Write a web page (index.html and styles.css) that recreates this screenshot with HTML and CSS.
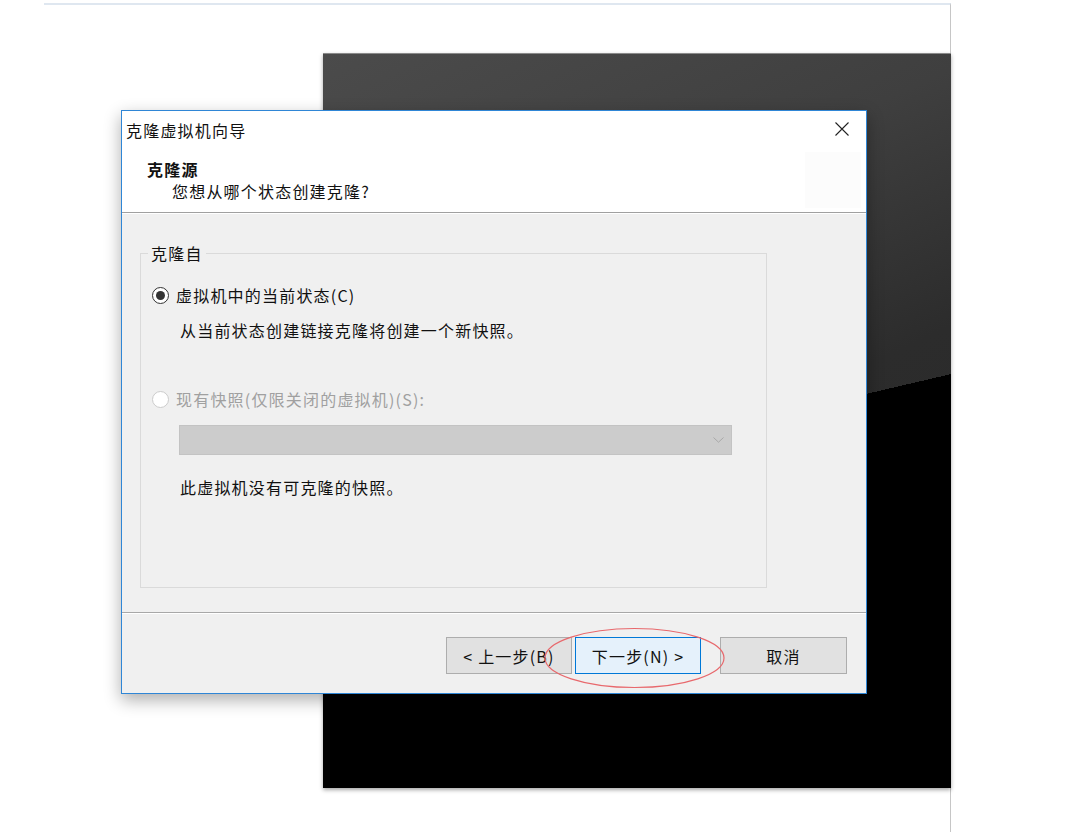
FILE: index.html
```html
<!DOCTYPE html>
<html lang="zh-CN">
<head>
<meta charset="utf-8">
<title>克隆虚拟机向导</title>
<link rel="stylesheet" href="styles.css">
</head>
<body>
<div class="page">
  <div class="vm-screen"></div>
  <div class="dialog">
    <div class="titlebar">
      <span class="title">克隆虚拟机向导</span>
      <svg class="close" width="14" height="14" viewBox="0 0 14 14"><path d="M0.5 0.5 L13.5 13.5 M13.5 0.5 L0.5 13.5" stroke="#222" stroke-width="1.1" fill="none"/></svg>
    </div>
    <div class="header">
      <div class="header-text">
        <div class="h-title">克隆源</div>
        <div class="h-sub">您想从哪个状态创建克隆?</div>
      </div>
      <div class="header-icon"></div>
    </div>
    <div class="body">
      <fieldset class="group">
        <legend>克隆自</legend>
        <div class="radio-row">
          <span class="radio checked"></span>
          <span>虚拟机中的当前状态(C)</span>
        </div>
        <div class="desc">从当前状态创建链接克隆将创建一个新快照。</div>
        <div class="radio-row disabled">
          <span class="radio"></span>
          <span>现有快照(仅限关闭的虚拟机)(S):</span>
        </div>
        <div class="select">
          <svg width="11" height="6" viewBox="0 0 11 6"><path d="M0.5 0.5 L5.5 5.2 L10.5 0.5" stroke="#a8a8a8" stroke-width="1" fill="none"/></svg>
        </div>
        <div class="desc note">此虚拟机没有可克隆的快照。</div>
      </fieldset>
    </div>
    <div class="footer">
      <button class="btn">&lt; 上一步(B)</button>
      <button class="btn primary">下一步(N) &gt;</button>
      <button class="btn cancel">取消</button>
    </div>
    <svg class="mark" width="181" height="62" viewBox="0 0 181 62"><ellipse cx="90.5" cy="31" rx="89.5" ry="29.5" fill="none" stroke="#e8686c" stroke-width="1.2"/></svg>
  </div>
</div>
</body>
</html>
```

FILE: styles.css
```css
html, body {
  margin: 0;
  padding: 0;
  background: #ffffff;
  width: 1082px;
  height: 832px;
  overflow: hidden;
  font-family: "Noto Sans CJK SC", "Noto Sans", sans-serif;
}

.page {
  position: relative;
  margin: 3px 0 0 44px;
  width: 906px;
  height: 829px;
  border-top: 2px solid #dfe7f0;
  border-right: 1px solid #c6c6c6;
}

.vm-screen {
  position: absolute;
  left: 279px;
  top: 48px;
  width: 628px;
  height: 735px;
  border-top: 1px solid #8a8a8a;
  box-sizing: border-box;
  background:
    linear-gradient(166.8deg, rgba(0,0,0,0) 455px, #000000 455px),
    linear-gradient(155deg, #4b4b4b 0%, #3f3f3f 30%, #2c2c2c 55%, #262626 100%);
  box-shadow: 0 2px 4px rgba(0, 0, 0, 0.35);
}

.dialog {
  position: absolute;
  left: 77px;
  top: 105px;
  width: 746px;
  height: 584px;
  box-sizing: border-box;
  border: 1px solid #2f86d6;
  background: #f0f0f0;
  display: flex;
  flex-direction: column;
  box-shadow: 0 6px 16px rgba(0, 0, 0, 0.32);
  font-size: 16px;
  letter-spacing: 1.2px;
  color: #111;
}

.titlebar {
  height: 38px;
  background: #fff;
  display: flex;
  align-items: center;
  padding: 0 17px 0 4px;
}

.title {
  line-height: 22px;
}

.close {
  margin-left: auto;
  margin-top: -2px;
}

.header {
  height: 63px;
  background: #fff;
  display: flex;
  border-bottom: 1px solid #a0a0a0;
  box-shadow: 0 1px 0 #ffffff;
}

.header-text {
  padding: 9px 0 0 25px;
  line-height: 22px;
}

.h-title {
  font-weight: 700;
}

.h-sub {
  padding-left: 25px;
}

.header-icon {
  width: 56px;
  height: 56px;
  margin: 3px 5px 0 auto;
  background: #fcfcfc;
}

.body {
  height: 399px;
  margin-top: 1px;
  padding: 28px 0 0 18px;
  box-sizing: border-box;
  border-bottom: 1px solid #a8a8a8;
}

.group {
  margin: 0;
  padding: 20px 0 0 11px;
  width: 627px;
  height: 346px;
  box-sizing: border-box;
  border: 1px solid #dadada;
}

.group legend {
  margin-left: -4px;
  padding: 0 3px;
  line-height: 22px;
}

.radio-row {
  display: flex;
  align-items: center;
  height: 22px;
  gap: 7px;
}

.radio {
  width: 17px;
  height: 17px;
  box-sizing: border-box;
  border: 1px solid #333;
  border-radius: 50%;
  background: #fff;
  display: flex;
  align-items: center;
  justify-content: center;
}

.radio.checked::after {
  content: "";
  width: 9px;
  height: 9px;
  border-radius: 50%;
  background: #333;
}

.radio-row.disabled {
  color: #a0a0a0;
  margin-top: 47px;
}

.radio-row.disabled .radio {
  border-color: #cccccc;
}

.desc {
  margin: 13px 0 0 28px;
  line-height: 22px;
}

.select {
  margin: 15px 0 0 27px;
  width: 553px;
  height: 30px;
  box-sizing: border-box;
  background: #cccccc;
  border: 1px solid #c3c3c3;
  display: flex;
  align-items: center;
  justify-content: flex-end;
  padding-right: 7px;
}

.desc.note {
  margin-top: 21px;
}

.footer {
  flex: 1;
  border-top: 1px solid #ffffff;
  display: flex;
  justify-content: flex-end;
  align-items: flex-start;
  padding: 23px 19px 0 0;
}

.btn {
  font-family: inherit;
  font-size: 16px;
  letter-spacing: 1.2px;
  color: #111;
  width: 126px;
  height: 37px;
  padding: 0;
  background: #e1e1e1;
  border: 1px solid #adadad;
  margin: 0;
}

.btn.primary {
  margin-left: 3px;
  background: #e5f1fb;
  border-color: #0078d7;
}

.btn.cancel {
  margin-left: 19px;
  width: 127px;
}

.mark {
  position: absolute;
  left: 422px;
  top: 516px;
}
```
